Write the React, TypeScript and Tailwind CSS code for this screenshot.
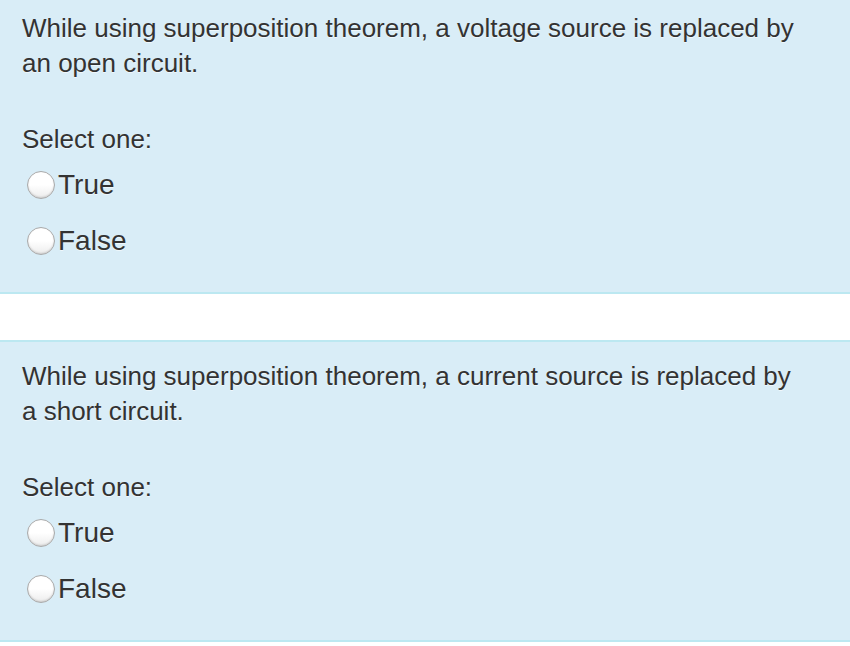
const questions = [
  "While using superposition theorem, a voltage source is replaced by an open circuit.",
  "While using superposition theorem, a current source is replaced by a short circuit.",
];

function Radio() {
  return (
    <span className="ml-[5px] mr-[3px] inline-block h-[28px] w-[28px] shrink-0 rounded-full border border-[#aaa] bg-gradient-to-b from-white via-white to-[#ececec] shadow-[inset_0_-1px_2px_rgba(0,0,0,0.15)]" />
  );
}

function Question({ text, first }: { text: string; first?: boolean }) {
  return (
    <div
      className={`border-y-2 border-[#bce8f1] bg-[#d9edf7] pl-[22px] pr-[40px] pt-[17px] pb-[23px] ${
        first ? "-mt-[8px]" : "mt-[46px]"
      }`}
    >
      <p className="leading-[35px]">{text}</p>
      <p className="mt-[41px] leading-[35px]">Select one:</p>
      <div className="flex h-[56px] items-center text-[28px]">
        <Radio />
        <span>True</span>
      </div>
      <div className="flex h-[56px] items-center text-[28px]">
        <Radio />
        <span>False</span>
      </div>
    </div>
  );
}

export default function App() {
  return (
    <div className="h-[646px] w-[850px] overflow-hidden bg-white font-['Liberation_Sans',Arial,sans-serif] text-[26px] text-[#333] [text-shadow:0_1px_0_rgba(255,255,255,0.6)]">
      <Question text={questions[0]} first />
      <Question text={questions[1]} />
    </div>
  );
}
